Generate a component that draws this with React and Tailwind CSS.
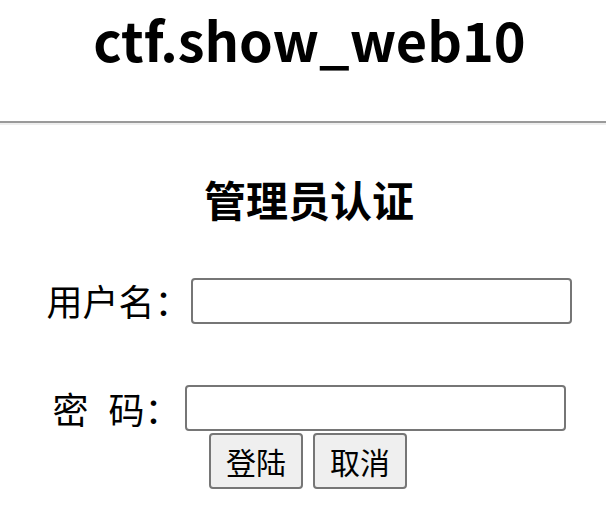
import React from 'react';

// admin login page, scaled up
export default function App() {
  return (
    <div className="min-h-screen bg-white text-black font-['Noto_Sans_CJK_SC',sans-serif]">
      <h1 className="pl-[13px] pt-[9px] text-center text-[54px] font-bold leading-[60px]">ctf.show_web10</h1>
      <hr className="mt-[52px] border-0 border-t-2 border-b-2 border-t-[#9a9a9a] border-b-[#eeeeee]" />

      <div className="flex flex-col items-center pl-[12px]">
        <h3 className="mt-[49px] text-[42px] font-bold leading-[50px]">管理员认证</h3>

        <div className="mt-[54px] flex items-center text-[36px] leading-[45px]">
          <span className="-translate-y-px">用户名：</span>
          <input
            type="text"
            className="h-[46px] w-[381px] rounded-[4px] border-2 border-[#767676] bg-white px-1 text-[30px] outline-none"
          />
        </div>

        <div className="mt-[61px] flex items-center text-[36px] leading-[46px]">
          <span>密</span>
          <span className="w-[20px]" />
          <span>码：</span>
          <input
            type="password"
            className="ml-[4px] h-[46px] w-[381px] rounded-[4px] border-2 border-[#767676] bg-white px-1 text-[30px] outline-none"
          />
        </div>

        <div className="mt-[2px] flex gap-[10px] pr-[2px]">
          <button className="h-[56px] w-[94px] rounded-[4px] border-2 border-[#767676] bg-[#efefef] text-[30px] leading-none">
            登陆
          </button>
          <button className="h-[56px] w-[94px] rounded-[4px] border-2 border-[#767676] bg-[#efefef] text-[30px] leading-none">
            取消
          </button>
        </div>
      </div>
    </div>
  );
}
